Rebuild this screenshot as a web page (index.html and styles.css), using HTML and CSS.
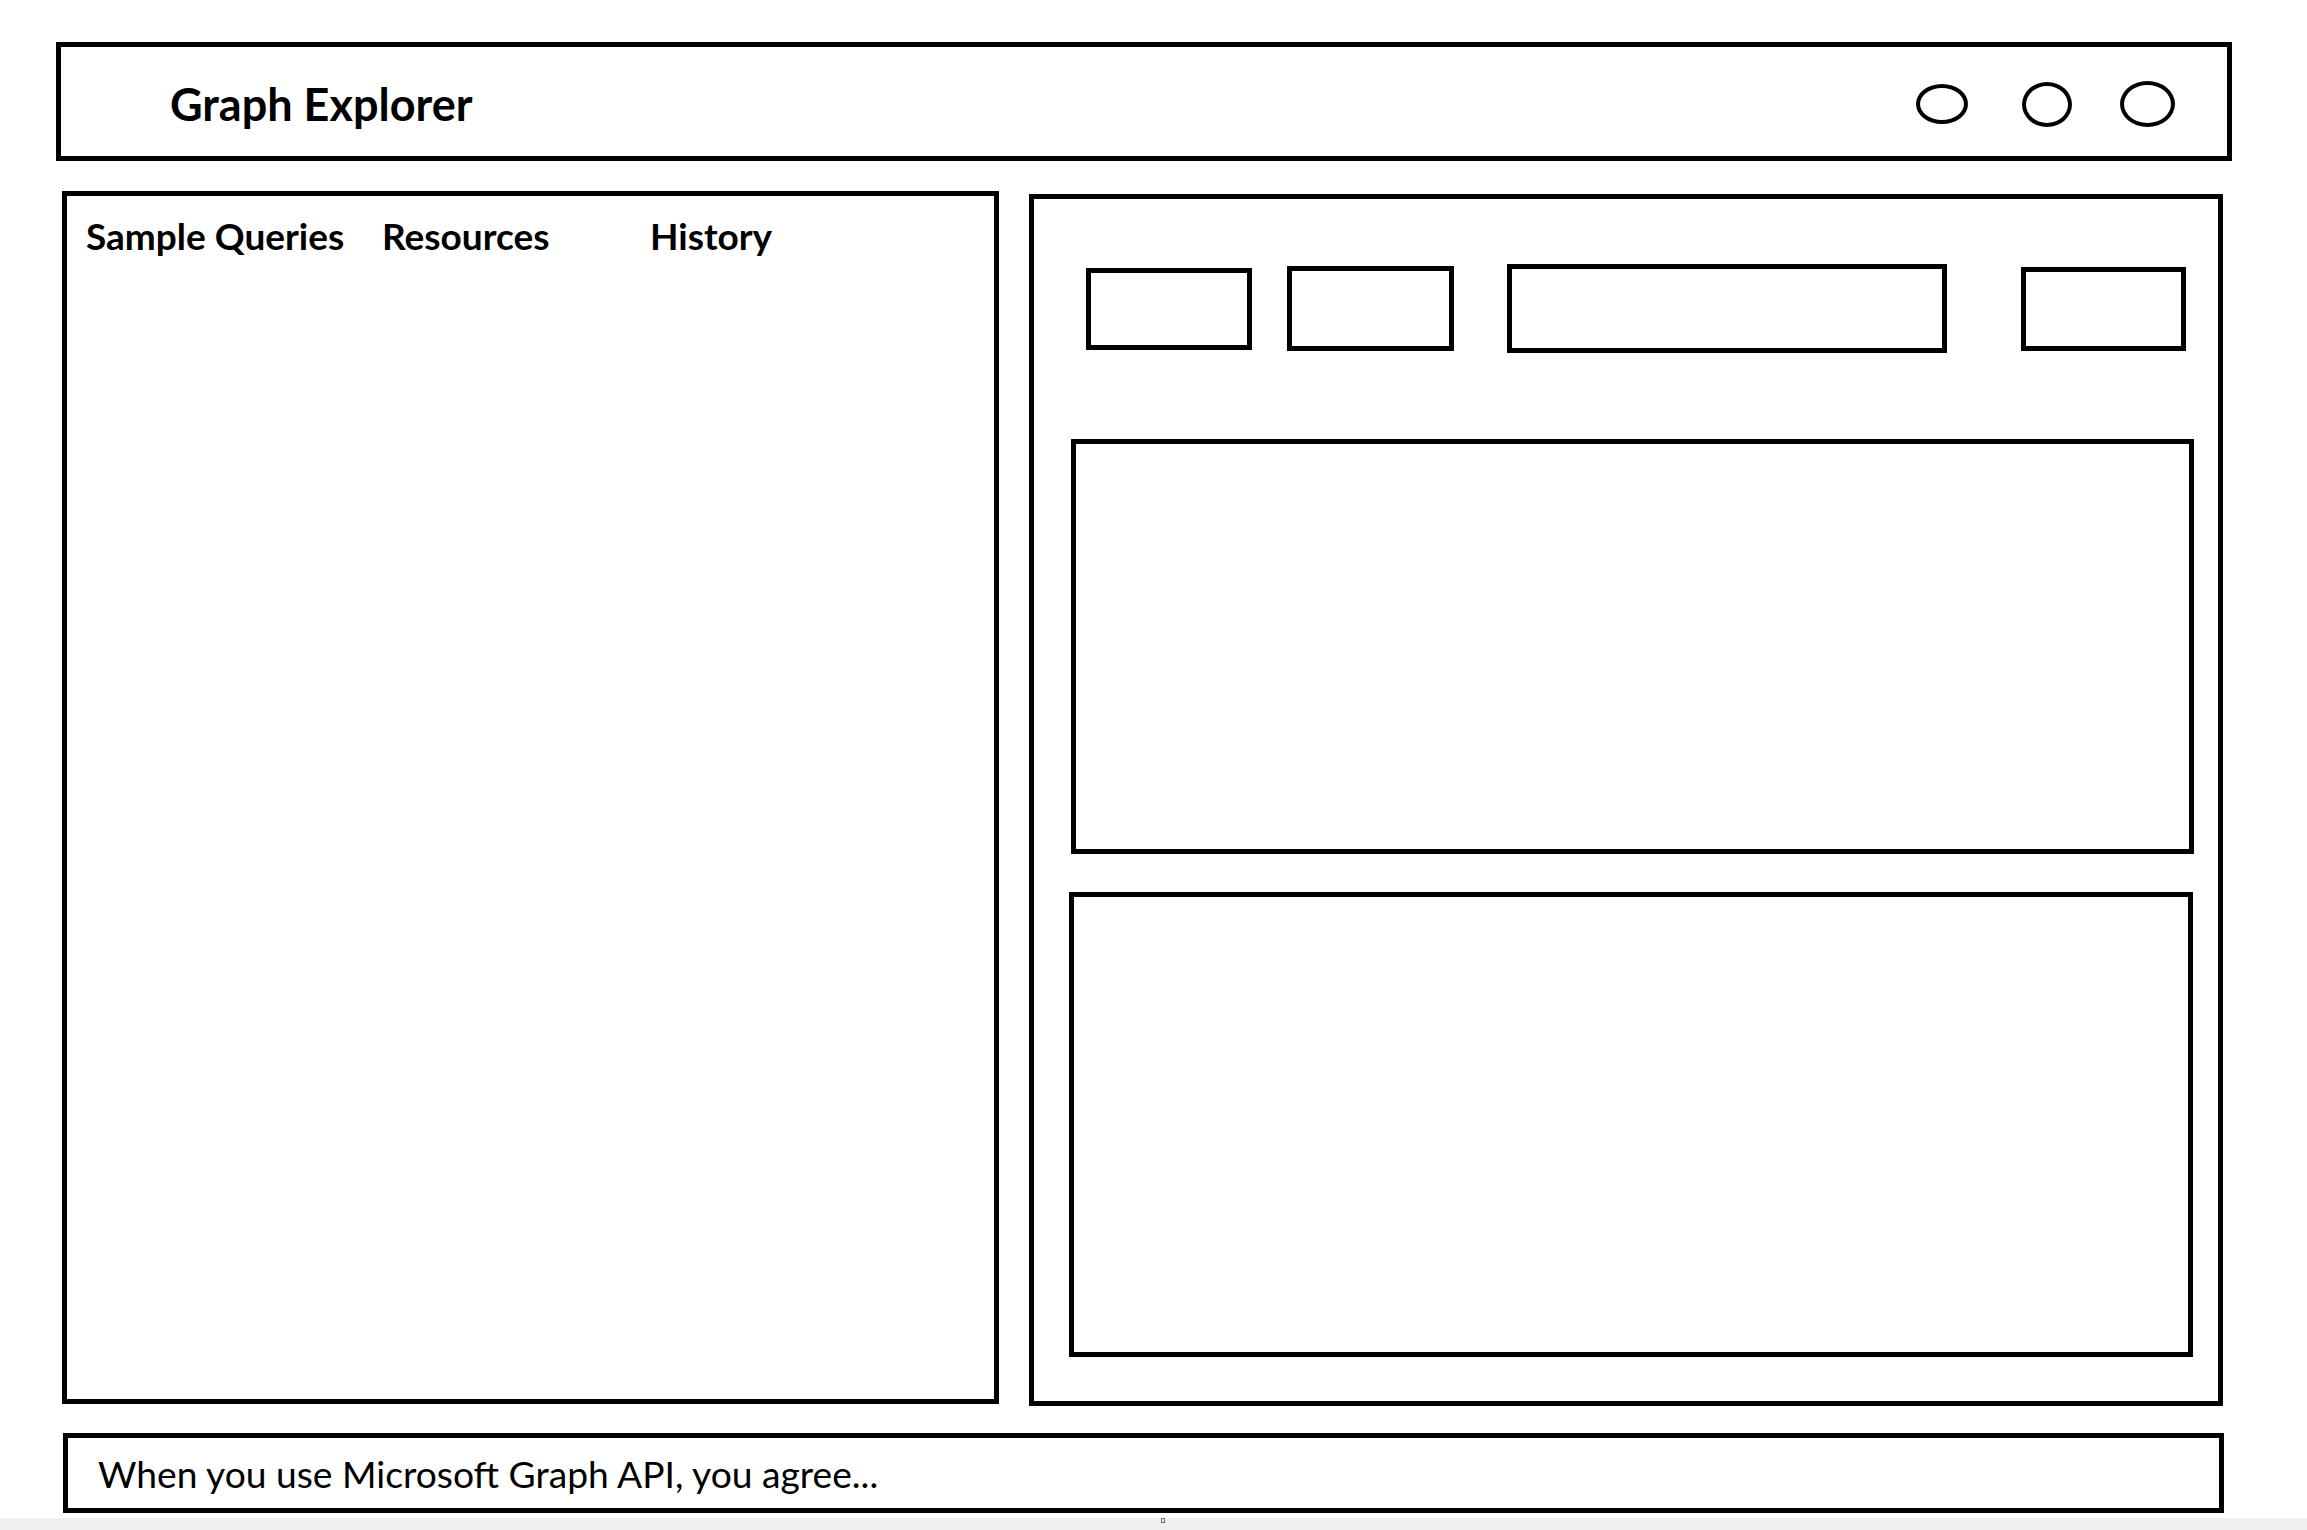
FILE: index.html
```html
<!DOCTYPE html>
<html lang="en">
<head>
<meta charset="utf-8">
<title>Graph Explorer</title>
<link rel="stylesheet" href="styles.css">
</head>
<body>
<div class="page">
  <header class="topbar">
    <h1 class="app-title">Graph Explorer</h1>
    <div class="window-controls">
      <span class="ctrl ctrl-1"></span>
      <span class="ctrl ctrl-2"></span>
      <span class="ctrl ctrl-3"></span>
    </div>
  </header>

  <div class="workspace">
    <aside class="sidebar">
      <nav class="tabs">
        <span class="tab tab-samples">Sample Queries</span>
        <span class="tab tab-resources">Resources</span>
        <span class="tab tab-history">History</span>
      </nav>
    </aside>

    <main class="query-panel">
      <div class="toolbar">
        <div class="tool tool-method"></div>
        <div class="tool tool-version"></div>
        <div class="tool tool-url"></div>
        <div class="tool tool-run"></div>
      </div>
      <div class="request-area"></div>
      <div class="response-area"></div>
    </main>
  </div>

  <footer class="terms">When you use Microsoft Graph API, you agree...</footer>

  <div class="statusbar"><span class="status-grip"></span></div>
</div>
</body>
</html>
```

FILE: styles.css
```css
* {
  box-sizing: border-box;
}

html,
body {
  margin: 0;
  padding: 0;
  background: #ffffff;
  overflow: hidden;
}

body {
  font-family: Lato, "Open Sans", sans-serif;
  color: #000000;
}

.page {
  width: 2307px;
  height: 1530px;
  padding-top: 42px;
  display: flex;
  flex-direction: column;
}

/* ---------- Header ---------- */
.topbar {
  margin-left: 56px;
  width: 2176px;
  height: 119px;
  border: 5px solid #000;
  display: flex;
  align-items: flex-start;
  flex-shrink: 0;
}

.app-title {
  margin: 0;
  padding: 30px 0 0 109px;
  font-size: 45px;
  line-height: 54px;
  font-weight: 700;
  white-space: nowrap;
}

.window-controls {
  margin-left: auto;
  margin-right: 52px;
  margin-top: 34px;
  height: 46px;
  display: flex;
  align-items: center;
}

.ctrl {
  display: block;
  border: 4px solid #000;
  border-radius: 50%;
}

.ctrl-1 {
  width: 52px;
  height: 40px;
}

.ctrl-2 {
  width: 50px;
  height: 45px;
  margin-left: 54px;
}

.ctrl-3 {
  width: 55px;
  height: 46px;
  margin-left: 48px;
}

/* ---------- Workspace ---------- */
.workspace {
  margin-top: 30px;
  margin-left: 62px;
  display: flex;
  align-items: flex-start;
  gap: 30px;
  flex-shrink: 0;
}

.sidebar {
  width: 937px;
  height: 1213px;
  border: 5px solid #000;
}

.tabs {
  display: flex;
  padding: 18px 0 0 19px;
}

.tab {
  font-size: 37px;
  line-height: 44.4px;
  font-weight: 700;
  white-space: nowrap;
}

.tab-samples {
  width: 296px;
}

.tab-resources {
  width: 268px;
}

/* ---------- Query panel ---------- */
.query-panel {
  margin-top: 3px;
  width: 1194px;
  height: 1212px;
  border: 5px solid #000;
  display: flex;
  flex-direction: column;
}

.toolbar {
  margin-top: 65px;
  padding-left: 52px;
  height: 89px;
  display: flex;
  align-items: center;
}

.tool {
  border: 5px solid #000;
  flex-shrink: 0;
}

.tool-method {
  width: 166px;
  height: 82px;
}

.tool-version {
  width: 167px;
  height: 85px;
  margin-left: 35px;
}

.tool-url {
  width: 440px;
  height: 89px;
  margin-left: 53px;
}

.tool-run {
  width: 165px;
  height: 84px;
  margin-left: 74px;
}

.request-area {
  margin-top: 86px;
  margin-left: 37px;
  width: 1123px;
  height: 415px;
  border: 5px solid #000;
}

.response-area {
  margin-top: 38px;
  margin-left: 35px;
  width: 1124px;
  height: 465px;
  border: 5px solid #000;
}

/* ---------- Footer ---------- */
.terms {
  margin-top: 27px;
  margin-left: 63px;
  width: 2161px;
  height: 80px;
  border: 5px solid #000;
  padding: 14px 0 0 30px;
  font-size: 37.2px;
  line-height: 44.4px;
  font-weight: 400;
  white-space: nowrap;
  flex-shrink: 0;
}

.statusbar {
  margin-top: 5px;
  height: 12px;
  background: #f0f0f0;
  flex-shrink: 0;
  display: flex;
  align-items: flex-start;
}

.status-grip {
  margin-left: 1161px;
  width: 4px;
  height: 5px;
  border: 1px solid #6b6b6b;
}
```
